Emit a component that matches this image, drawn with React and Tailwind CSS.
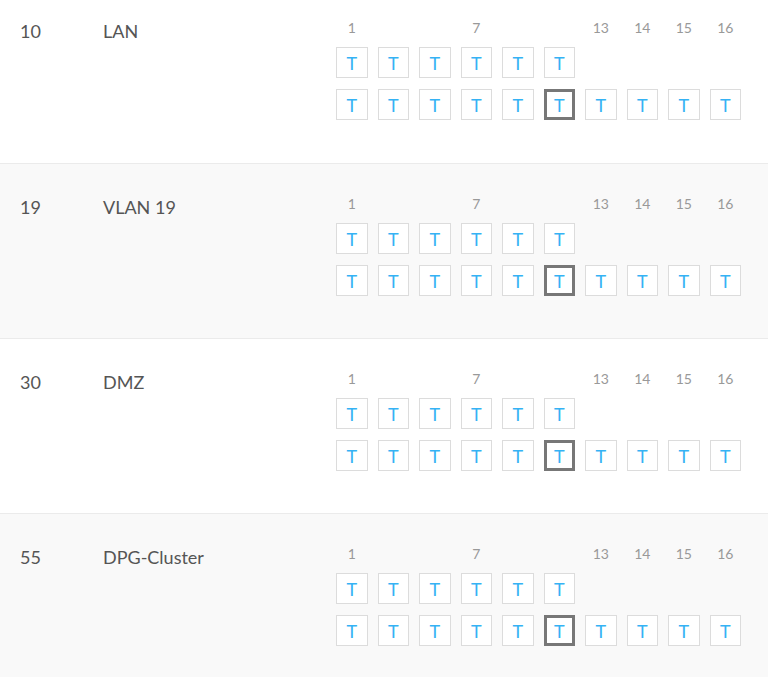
import React from "react";

const networks = [
  { id: "10", name: "LAN" },
  { id: "19", name: "VLAN 19" },
  { id: "30", name: "DMZ" },
  { id: "55", name: "DPG-Cluster" },
];

// column labels above the port grid (index -> label)
const labels = ["1", "", "", "7", "", "", "13", "14", "15", "16"];

function Port({ selected }) {
  return (
    <div
      className={
        selected
          ? "w-[31.5px] h-[31px] flex items-center justify-center border-[3px] border-[#777] text-[#35b2f4] text-[18px] leading-none bg-white"
          : "w-[31.5px] h-[31px] flex items-center justify-center border border-[#dcdcdc] text-[#35b2f4] text-[18px] leading-none bg-white"
      }
    >
      T
    </div>
  );
}

function NetworkRow({ net, index }) {
  const shaded = index % 2 === 1;
  return (
    <div
      className={
        (shaded ? "bg-[#f9f9f9] " : "bg-white ") +
        (index > 0 ? "border-t border-[#ebebeb] " : "") +
        "h-[175px] flex pt-[31px]"
      }
    >
      <div className="w-[103px] pl-[20px] text-[18px] leading-[24px] text-[#555]">{net.id}</div>
      <div className="w-[233px] text-[18px] leading-[24px] text-[#555]">{net.name}</div>
      <div className="flex flex-col">
        <div className="grid grid-cols-[repeat(10,31.5px)] gap-x-[10px] h-[18px]">
          {labels.map((l, i) => (
            <div key={i} className="text-center text-[14px] leading-[18px] text-[#999]">
              {l}
            </div>
          ))}
        </div>
        <div className="grid grid-cols-[repeat(10,31.5px)] gap-x-[10px] mt-[10px]">
          {Array.from({ length: 6 }).map((_, i) => (
            <Port key={i} />
          ))}
        </div>
        <div className="grid grid-cols-[repeat(10,31.5px)] gap-x-[10px] mt-[11px]">
          {Array.from({ length: 10 }).map((_, i) => (
            <Port key={i} selected={i === 5} />
          ))}
        </div>
      </div>
    </div>
  );
}

export default function App() {
  return (
    <div className="w-[768px] h-[677px] overflow-hidden bg-white" style={{ fontFamily: "Lato, 'Open Sans', sans-serif" }}>
      <div className="-mt-[12px]">
        {networks.map((n, i) => (
          <NetworkRow key={n.id} net={n} index={i} />
        ))}
      </div>
    </div>
  );
}
